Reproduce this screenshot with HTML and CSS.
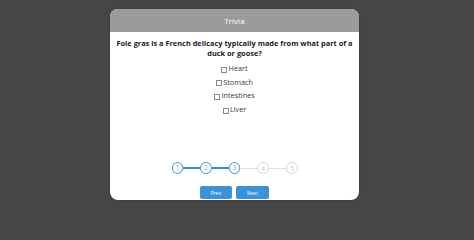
FILE: index.html
```html
<!DOCTYPE html>
<html>
<head>
<meta charset="utf-8">
<link rel="stylesheet" href="styles.css">
</head>
<body>
<div class="card">
  <div class="header">Trivia</div>
  <div class="content">
    <div class="question">Foie gras is a French delicacy typically made from what part of a duck or goose?</div>
    <ul class="options">
      <li><span class="box"></span>Heart</li>
      <li><span class="box"></span>Stomach</li>
      <li><span class="box"></span>Intestines</li>
      <li><span class="box"></span>Liver</li>
    </ul>
    <div class="spacer"></div>
    <div class="stepper">
      <span class="step done">1</span><span class="line done"></span>
      <span class="step done">2</span><span class="line done"></span>
      <span class="step done">3</span><span class="line"></span>
      <span class="step">4</span><span class="line"></span>
      <span class="step">5</span>
    </div>
    <div class="buttons">
      <button class="btn">Prev</button>
      <button class="btn">Next</button>
    </div>
  </div>
</div>
</body>
</html>
```
FILE: styles.css
```css
html, body {
  margin: 0;
  padding: 0;
  background: #464646;
  height: 100%;
}
body {
  font-family: "Open Sans", "Noto Sans", sans-serif;
  overflow: hidden;
}
.card {
  width: 249px;
  height: 191px;
  margin: 9px 0 0 110px;
  background: #fff;
  border-radius: 8px;
  overflow: hidden;
  display: flex;
  flex-direction: column;
  box-shadow: 0 0 2px rgba(0,0,0,0.3);
}
.header {
  height: 23px;
  background: #9b9b9b;
  color: #fff;
  font-size: 8px;
  display: flex;
  align-items: center;
  justify-content: center;
}
.content {
  flex: 1;
  display: flex;
  flex-direction: column;
  align-items: center;
  padding: 6px 0 1px;
}
.question {
  font-weight: 700;
  font-size: 7.4px;
  line-height: 10px;
  text-align: center;
  color: #1a1a1a;
  width: 247px;
}
.options {
  list-style: none;
  margin: 4px 0 0;
  padding: 0;
  display: flex;
  flex-direction: column;
  align-items: center;
}
.options li {
  font-size: 7.3px;
  line-height: 13.7px;
  color: #3a3a3a;
  display: flex;
  align-items: center;
}
.box {
  width: 4px;
  height: 4px;
  border: 0.7px solid #8a8a8a;
  margin-right: 1.2px;
  margin-top: 1.5px;
}
.spacer { flex: 1; }
.stepper {
  display: flex;
  align-items: center;
  margin-left: 1px;
}
.step {
  width: 10px;
  height: 10px;
  border-radius: 50%;
  border: 1px solid #d8d8d8;
  color: #c8c8c8;
  font-size: 6.5px;
  display: flex;
  align-items: center;
  justify-content: center;
}
.step.done {
  border: 1.3px solid #3a8ed4;
  width: 9.4px;
  height: 9.4px;
  color: #8fa3b5;
}
.line {
  width: 17px;
  height: 1px;
  background: #e0e0e0;
}
.line.done {
  height: 1.4px;
  background: #3a8ed4;
}
.buttons {
  display: flex;
  gap: 4px;
  margin-top: 12px;
}
.btn {
  width: 32px;
  height: 13px;
  padding: 0;
  border: none;
  border-radius: 2px;
  background: #3a92d8;
  color: #fff;
  font-family: "Open Sans", "Noto Sans", sans-serif;
  font-size: 5px;
}
.btn + .btn { width: 33px; }
```
